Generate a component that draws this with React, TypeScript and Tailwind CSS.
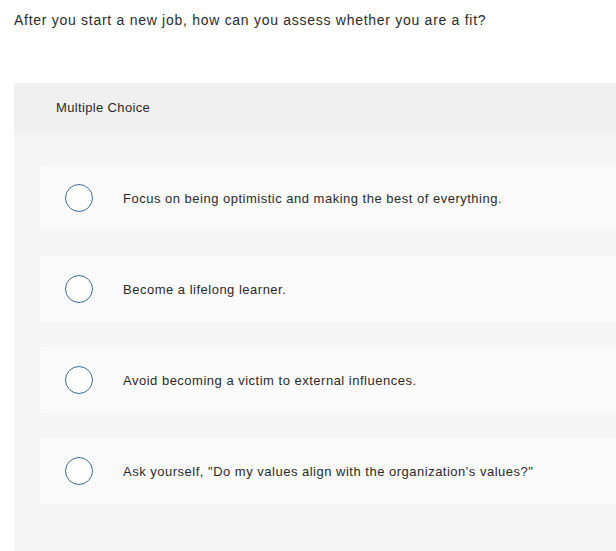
const options = [
  'Focus on being optimistic and making the best of everything.',
  'Become a lifelong learner.',
  'Avoid becoming a victim to external influences.',
  'Ask yourself, "Do my values align with the organization\'s values?"',
];

export default function App() {
  return (
    <div
      className="w-[616px] h-[551px] overflow-hidden bg-white text-[#2b2b2b]"
      style={{ fontFamily: '"Liberation Sans", Arial, sans-serif' }}
    >
      <p className="pl-[14px] pt-[10px] text-[14px] leading-[20px] tracking-[0.72px]">
        After you start a new job, how can you assess whether you are a fit?
      </p>

      <div className="ml-[14px] mt-[53px] w-[620px] bg-[#f5f5f5] h-[600px]">
        <div className="h-[50px] bg-[#f0f0f0] pl-[42px] flex items-center text-[13px] tracking-[0.35px]">
          Multiple Choice
        </div>

        <div className="pl-[26px] pt-[32px] flex flex-col gap-[25px]">
          {options.map((o) => (
            <div key={o} className="h-[66px] bg-[#fafafa] rounded-[3px] flex items-center">
              <span className="ml-[25px] w-[28px] h-[28px] rounded-full border-[1.5px] border-[#3a6b9c] bg-white shrink-0" />
              <span className="ml-[30px] pt-px text-[13px] tracking-[0.5px]">{o}</span>
            </div>
          ))}
        </div>
      </div>
    </div>
  );
}
